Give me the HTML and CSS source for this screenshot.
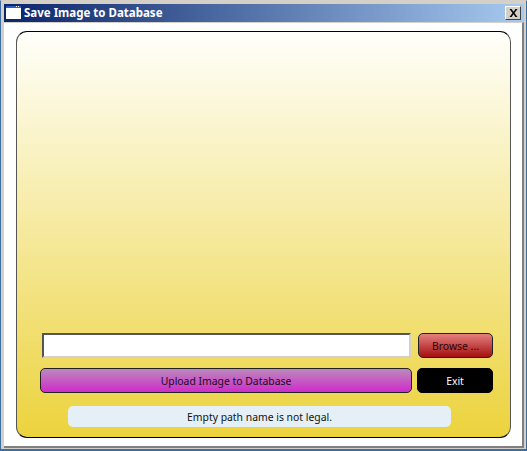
FILE: index.html
```html
<!DOCTYPE html>
<html lang="en">
<head>
<meta charset="utf-8">
<title>Save Image to Database</title>
<link rel="stylesheet" href="styles.css">
</head>
<body>
<div class="window">
  <div class="titlebar">
    <svg class="app-icon" width="15" height="13" viewBox="0 0 15 13"><rect width="15" height="13" fill="#fff"/><rect width="15" height="2" fill="#2a5fc4"/><rect x="10" y="0" width="1" height="1" fill="#fff"/><rect x="12" y="0" width="1" height="1" fill="#fff"/></svg>
    <span class="title">Save Image to Database</span>
    <button class="close" aria-label="Close"><svg width="9" height="8" viewBox="0 0 9 8"><path d="M0.500 0h2L4.500 2.800 6.500 0h2L5.500 4l3 4h-2L4.500 5.200 2.500 8h-2l3-4z" fill="#000"/></svg></button>
  </div>
  <div class="client">
    <main class="panel">
      <div class="row row-path">
        <input class="path" type="text" aria-label="Image path">
        <button class="btn browse">Browse ...</button>
      </div>
      <div class="row row-upload">
        <button class="btn upload">Upload Image to Database</button>
        <button class="btn exit">Exit</button>
      </div>
      <div class="status">Empty path name is not legal.</div>
    </main>
  </div>
</div>
</body>
</html>
```
FILE: styles.css
```css
* { box-sizing: border-box; }
html, body { margin: 0; height: 100%; }
body { width: 527px; height: 451px; overflow: hidden; font-family: "Noto Sans", sans-serif; }
.window {
  width: 527px; height: 451px; display: flex; flex-direction: column;
  background: #d4d0c8; border: 1px solid #3a6ea5; border-top-color: #d4d0c8; border-bottom-width: 2px;
  padding: 3px 2px 1px 3px;
}
.titlebar {
  height: 18px; flex: none; display: flex; align-items: center; padding: 0 3px 1px 1px;
  background: linear-gradient(90deg, #0a246a, #a6caf0);
}
.app-icon { flex: none; margin-left: 1px; }
.title { margin-left: 3px; flex: 1; color: #fff; font: bold 11.5px "Noto Sans", sans-serif; }
.close {
  width: 16px; height: 14px; padding: 0; display: flex; align-items: center; justify-content: center;
  background: #d4d0c8; border: 1px solid; border-color: #fff #404040 #404040 #fff;
}
.client { flex: 1; background: #fff; padding: 8px 11px 8px 12px; border-top: 1px solid #d4d0c8; border-bottom: 2px solid #808080; border-right: 2px solid #808080; }
.panel {
  height: 100%; display: flex; flex-direction: column; justify-content: flex-end;
  padding: 0 17px 10px 23px; border: 1px solid #000; border-left-color: #555; border-right-color: #555; border-radius: 11px;
  background: linear-gradient(180deg, #fffffb 0%, #ecd33d 100%);
}
.row { display: flex; }
.row-path { height: 25px; padding-left: 2px; gap: 7px; }
.row-upload { height: 25px; margin-top: 10px; gap: 5px; }
.path { flex: none; width: 369px; height: 25px; background: #fff; border: 2px solid; border-color: #555 #d4d0c8 #d4d0c8 #555; outline: none; }
.btn { flex: none; font: 10.4px "Noto Sans", sans-serif; padding: 0; height: 25px; border: 1px solid #222; border-radius: 5px; }
.browse { width: 75px; color: #2a0505; background: linear-gradient(180deg, #e58080 0%, #a50f0f 100%); }
.upload { width: 372px; color: #1a0a1a; background: linear-gradient(180deg, #bb8abb 0%, #d02bca 100%); }
.exit { width: 76px; color: #fff; background: #000; border-color: #000; }
.status {
  width: 383px; height: 21px; margin: 13px 0 0 28px; border-radius: 5px; background: #e4f0f6;
  font-size: 10.4px; color: #111; display: flex; align-items: center; justify-content: center;
}
```
